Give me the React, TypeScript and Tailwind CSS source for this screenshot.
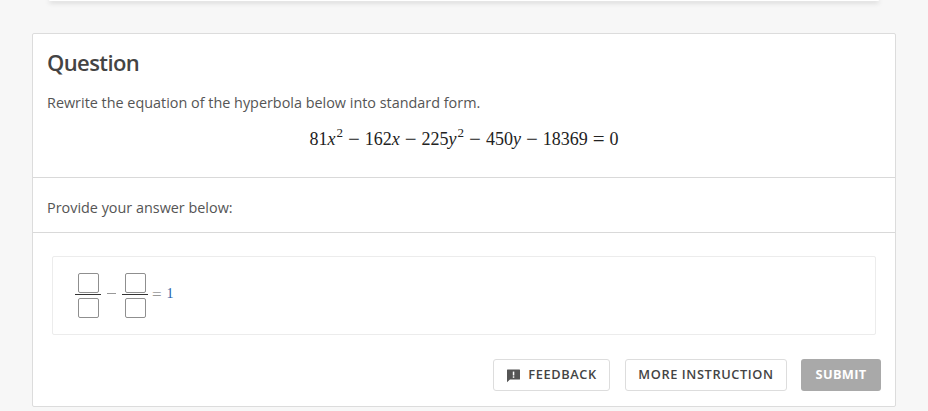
import { Fragment } from 'react'

const serif = { fontFamily: '"Liberation Serif", serif' }

function Blank() {
  return <span className="block h-[20px] w-[21px] rounded-[2px] border border-[#8f8f8f] bg-white" />
}

function BlankFraction() {
  return (
    <span className="flex w-[26px] flex-col items-center">
      <span className="pb-[1px]">
        <Blank />
      </span>
      <span className="block h-[1px] w-full bg-[#333333]" />
      <span className="pt-[3px]">
        <Blank />
      </span>
    </span>
  )
}

function FeedbackIcon() {
  return (
    <svg width="15" height="15" viewBox="0 0 15 15" className="shrink-0">
      <path
        d="M1.5 1.5h12a.5.5 0 0 1 .5.5v9a.5.5 0 0 1-.5.5H4L1 14.2V2a.5.5 0 0 1 .5-.5z"
        fill="#555555"
      />
      <rect x="6.8" y="3.6" width="1.5" height="3.9" fill="#ffffff" />
      <rect x="6.8" y="8.3" width="1.5" height="1.5" fill="#ffffff" />
    </svg>
  )
}

const equation: [string, boolean, string?][] = [
  ['81', false],
  ['x', true, '2'],
  ['−', false],
  ['162', false],
  ['x', true],
  ['−', false],
  ['225', false],
  ['y', true, '2'],
  ['−', false],
  ['450', false],
  ['y', true],
  ['−', false],
  ['18369', false],
  ['=', false],
  ['0', false],
]

export default function App() {
  return (
    <div
      className="h-[411px] w-[928px] overflow-hidden bg-[#f7f7f7] text-[#444444]"
      style={{ fontFamily: '"Open Sans", sans-serif' }}
    >
      <div className="mx-[49px] h-[1px] rounded-b-[3px] bg-white shadow-[0_1px_5px_rgba(0,0,0,0.45)]" />

      <div className="mx-[32px] mt-[32px] h-[374px] rounded-[2px] border border-[#dcdcdc] bg-white">
        <div className="h-[144px] border-b border-[#d9d9d9] px-[14px] pt-[13px]">
          <h2 className="text-[22px] leading-[30px] font-semibold tracking-[-0.6px] text-[#444444]">Question</h2>
          <p className="mt-[16px] text-[14.4px] leading-[20px] text-[#555555]">
            Rewrite the equation of the hyperbola below into standard form.
          </p>
          <div className="mt-[14px] flex h-[24px] items-center justify-center text-[18px] text-[#222222]" style={serif}>
            {equation.map(([text, italic, sup], i) => {
              const isOp = text === '−' || text === '='
              return (
                <Fragment key={i}>
                  <span className={isOp ? 'mx-[5px] text-[21px] leading-none' : italic ? 'italic' : ''}>{text}</span>
                  {sup ? <sup className="ml-[1px] text-[13px] leading-none">{sup}</sup> : null}
                </Fragment>
              )
            })}
          </div>
        </div>

        <div className="flex h-[55px] items-center border-b border-[#d9d9d9] px-[14px] pt-[5px]">
          <p className="text-[14.4px] leading-[20px] text-[#555555]">Provide your answer below:</p>
        </div>

        <div className="px-[19px] pt-[23px]">
          <div className="flex h-[79px] items-center rounded-[2px] border border-[#ececec] pl-[22px]" style={serif}>
            <BlankFraction />
            <span className="mx-[6px] mb-[4px] block h-[1px] w-[9px] bg-[#999999]" />
            <BlankFraction />
            <span className="mb-[3px] ml-[4px] text-[17px] leading-none text-[#999999]">=</span>
            <span className="mb-[3px] ml-[5px] text-[14px] leading-none text-[#2a5fa8]">1</span>
          </div>
        </div>

        <div className="flex justify-end pt-[24px] pr-[14px] text-[12.8px] font-semibold tracking-[0.6px]">
          <button className="flex h-[32px] w-[117px] items-center justify-center gap-[7px] rounded-[3px] border border-[#dddddd] bg-white text-[#444444]">
            <FeedbackIcon />
            FEEDBACK
          </button>
          <button className="ml-[15px] h-[32px] w-[162px] rounded-[3px] border border-[#dddddd] bg-white text-[#444444]">
            MORE INSTRUCTION
          </button>
          <button className="ml-[14px] h-[32px] w-[80px] rounded-[3px] bg-[#a9a9a9] font-bold tracking-[0.3px] text-white">
            SUBMIT
          </button>
        </div>
      </div>
    </div>
  )
}
